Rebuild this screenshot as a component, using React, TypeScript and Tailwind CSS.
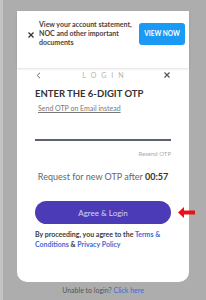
export default function App() {
  return (
    <div
      className="relative flex h-[300px] w-[206px] flex-col overflow-hidden bg-[#adadad]"
      style={{ fontFamily: "Lato, 'Liberation Sans', sans-serif" }}
    >
      <div className="absolute left-0 top-0 h-full w-[3px] bg-[#c4c4c4]" />
      <div className="mx-[17px] mt-[11px] flex flex-col">
        {/* banner */}
        <div className="relative z-10 flex h-[57px] items-start bg-white pl-[11px] pr-[4px] pt-[9px] shadow-[0_1px_2px_rgba(0,0,0,0.12)]">
          <svg className="mt-[12px]" width="6" height="6" viewBox="0 0 6 6">
            <path d="M0.5 0.5 L5.5 5.5 M5.5 0.5 L0.5 5.5" stroke="#333" strokeWidth="1.3" />
          </svg>
          <p className="ml-[5px] w-[96px] text-[7px] font-bold leading-[9px] text-[#444]">
            View your account statement, NOC and other important documents
          </p>
          <button className="ml-auto mt-[3px] flex h-[22px] w-[46px] items-center justify-center rounded-[3px] bg-[#1b9af5] text-[6.5px] font-bold text-white">
            VIEW NOW
          </button>
        </div>

        {/* login card */}
        <div className="flex h-[214px] flex-col rounded-b-[10px] bg-white px-[18px] pt-[2px]">
          <div className="flex h-[10px] items-center justify-between">
            <svg width="5" height="7" viewBox="0 0 5 7" className="ml-[1px]">
              <path d="M4 0.8 L1.2 3.5 L4 6.2" stroke="#666" strokeWidth="1" fill="none" />
            </svg>
            <span className="pl-[6px] text-[7px] tracking-[5px] text-[#b3b3b3]">LOGIN</span>
            <svg width="6" height="6" viewBox="0 0 6 6" className="mr-[1px]">
              <path d="M0.5 0.5 L5.5 5.5 M5.5 0.5 L0.5 5.5" stroke="#555" strokeWidth="1.2" />
            </svg>
          </div>
          <h1 className="mt-[8px] text-[9.5px] font-bold leading-[12px] text-[#333]">
            ENTER THE 6-DIGIT OTP
          </h1>
          <a className="ml-[3px] mt-[4px] text-[7px] leading-[8px] text-[#777] underline">
            Send OTP on Email instead
          </a>
          <div className="mt-[27px] h-[2px] w-full bg-[#5d6270]" />
          <div className="mt-[9px] text-right text-[6px] leading-[8px] text-[#aaa]">Resend OTP</div>
          <p className="mt-[13px] text-center text-[9px] leading-[12px] text-[#666]">
            Request for new OTP after <span className="font-bold text-[#333]">00:57</span>
          </p>
          <div className="relative mt-[18px]">
            <button className="flex h-[23px] w-full items-center justify-center rounded-full bg-[#4b3bb7] text-[8px] text-[#d8d2f5]">
              Agree &amp; Login
            </button>
            <svg
              className="absolute left-[142px] top-[5px]"
              width="19"
              height="13"
              viewBox="0 0 19 13"
            >
              <path d="M1 6.5 L7 1 L7 4.5 L18 4.5 L18 8.5 L7 8.5 L7 12 Z" fill="#e5121b" />
            </svg>
          </div>
          <p className="mt-[5px] text-[7px] font-bold leading-[10px] text-[#3a3a3a]">
            By proceeding, you agree to the <span className="text-[#3d6bd6]">Terms &amp;</span>
            <br />
            <span className="text-[#3d6bd6]">Conditions</span> &amp;{" "}
            <span className="text-[#3d6bd6]">Privacy Policy</span>
          </p>
        </div>
      </div>
      <p className="mt-[3px] text-center text-[7px] leading-[10px] text-[#555]">
        Unable to login? <span className="text-[#3d6bd6]">Click here</span>
      </p>
    </div>
  );
}
